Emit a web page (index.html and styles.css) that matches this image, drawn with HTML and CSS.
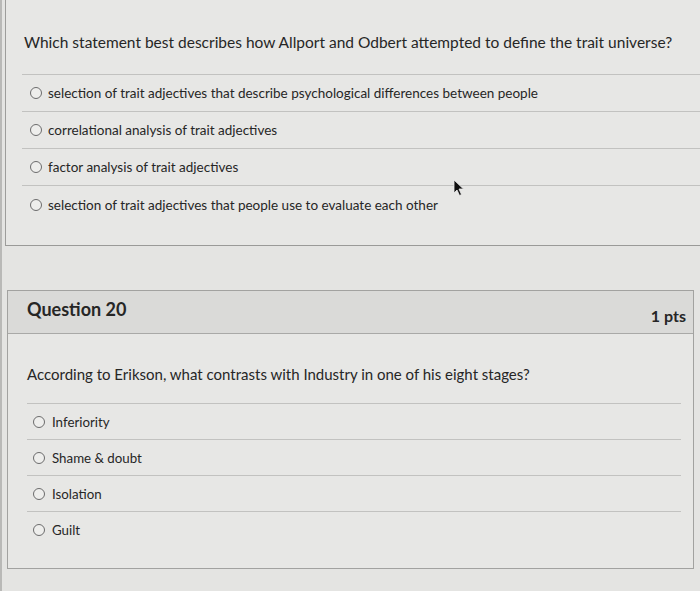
FILE: index.html
```html
<!DOCTYPE html>
<html lang="en">
<head>
<meta charset="utf-8">
<title>Quiz</title>
<link rel="stylesheet" href="styles.css">
</head>
<body>
<div class="page">
  <section class="card card-prev">
    <p class="question q1">Which statement best describes how Allport and Odbert attempted to define the trait universe?</p>
    <ul class="answers answers-1">
      <li class="answer"><span class="radio"></span><span>selection of trait adjectives that describe psychological differences between people</span></li>
      <li class="answer"><span class="radio"></span><span>correlational analysis of trait adjectives</span></li>
      <li class="answer"><span class="radio"></span><span>factor analysis of trait adjectives</span></li>
      <li class="answer"><span class="radio"></span><span>selection of trait adjectives that people use to evaluate each other</span></li>
    </ul>
  </section>

  <section class="card card-q20">
    <header class="card-header">
      <h2 class="title">Question 20</h2>
      <span class="pts">1 pts</span>
    </header>
    <div class="card-body">
      <p class="question q2">According to Erikson, what contrasts with Industry in one of his eight stages?</p>
      <ul class="answers answers-2">
        <li class="answer"><span class="radio"></span><span>Inferiority</span></li>
        <li class="answer"><span class="radio"></span><span>Shame &amp; doubt</span></li>
        <li class="answer"><span class="radio"></span><span>Isolation</span></li>
        <li class="answer"><span class="radio"></span><span>Guilt</span></li>
      </ul>
    </div>
  </section>

  <svg class="cursor" width="12" height="18" viewBox="0 0 12 18" aria-hidden="true">
    <path d="M1 1 L1 14 L4 11 L6.5 16.5 L8.5 15.5 L6 10 L10.5 10 Z" fill="#111" stroke="#eee" stroke-width="0.8"/>
  </svg>
</div>
</body>
</html>
```
FILE: styles.css
```css
html, body {
  margin: 0;
  padding: 0;
}
body {
  background: #e4e4e2;
  font-family: Lato, "Open Sans", "Liberation Sans", sans-serif;
  color: #262626;
  width: 700px;
  height: 591px;
  overflow: hidden;
}
.page {
  position: relative;
  border-left: 2px solid #b9b9b7;
  height: 591px;
  box-sizing: border-box;
}
.card {
  background: #e7e7e5;
}
.card-prev {
  margin-left: 3px;
  border-left: 1px solid #9d9d9b;
  border-bottom: 1px solid #9a9a98;
  padding: 32px 0 22px 0;
}
.question {
  margin: 0;
  font-size: 15.5px;
  line-height: 20px;
}
.q1 {
  padding-left: 18px;
}
.answers {
  list-style: none;
  margin: 0;
  padding: 0;
  border-top: 1px solid #c2c2c0;
}
.answers-1 {
  margin: 22px 0 0 16px;
}
.answer {
  display: flex;
  align-items: center;
  font-size: 13.5px;
  border-bottom: 1px solid #c2c2c0;
  box-sizing: border-box;
}
.answer:last-child {
  border-bottom: none;
}
.answers-1 .answer {
  height: 37px;
  padding-left: 8px;
  gap: 6px;
}
.radio {
  width: 10px;
  height: 10px;
  border: 1.5px solid #6c6c6c;
  border-radius: 50%;
  background: #eeeeec;
  flex: none;
}
.card-q20 {
  margin: 44px 6px 0 5px;
  border: 1px solid #a2a2a0;
}
.card-header {
  display: flex;
  justify-content: space-between;
  align-items: center;
  height: 42px;
  padding: 0 7px 0 19px;
  background: #dadad8;
  border-bottom: 1px solid #a9a9a7;
}
.title {
  margin: 0;
  font-size: 18px;
  font-weight: 700;
  color: #262626;
  padding-bottom: 6px;
}
.pts {
  font-size: 16px;
  font-weight: 700;
  color: #262626;
  padding-top: 6px;
}
.card-body {
  padding: 30px 12px 20px 19px;
}
.q2 {
  font-size: 15px;
}
.answers-2 {
  margin-top: 19px;
}
.answers-2 .answer {
  height: 36px;
  padding-left: 6px;
  gap: 7px;
  font-size: 13.3px;
}
.cursor {
  position: absolute;
  left: 451px;
  top: 179px;
}
```
